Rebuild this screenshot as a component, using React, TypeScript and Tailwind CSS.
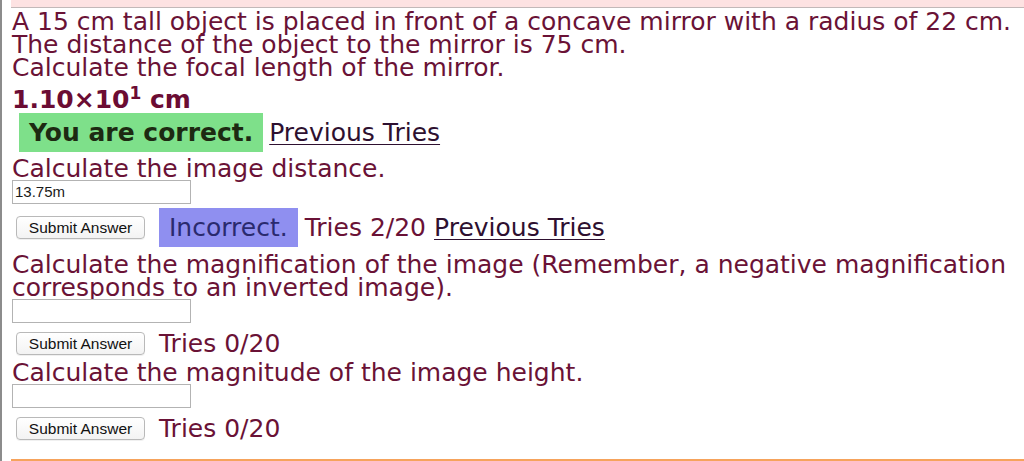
import React from "react";

const body = "font-['DejaVu_Sans',Verdana,sans-serif] text-[25px] leading-[23px] text-[#6a1236]";

function SubmitButton() {
  return (
    <button
      type="button"
      className="ml-[4px] h-[23px] w-[129px] shrink-0 rounded-[4px] border border-[#b9b9b9] bg-gradient-to-b from-white to-[#f3f3f3] font-['Liberation_Sans',Arial,sans-serif] text-[15.5px] leading-none text-[#111] shadow-[0_1px_0_rgba(0,0,0,0.06)]"
    >
      Submit Answer
    </button>
  );
}

function AnswerBox({ value = "" }: { value?: string }) {
  return (
    <div className="flex h-[24px] w-[179px] items-center border border-[#b3b3b3] bg-white px-[2px] font-['Liberation_Sans',Arial,sans-serif] text-[15px] text-[#1a1a1a]">
      {value}
    </div>
  );
}

function PrevTries() {
  return <span className="text-[#2e1030] underline decoration-1 underline-offset-[3px]">Previous Tries</span>;
}

export default function App() {
  return (
    <div className="flex h-[461px] w-[1024px] overflow-hidden border-l-2 border-[#8c8c8c] bg-white">
      <div className="ml-[9px] flex flex-1 flex-col">
        <div className="h-[8px] shrink-0 border-b border-[#c2b8b8] bg-[#fde2e2]" />

        <div className={`${body} mt-[2px] ml-[1px] whitespace-nowrap`}>
          A 15 cm tall object is placed in front of a concave mirror with a radius of 22 cm.
          <br />
          The distance of the object to the mirror is 75 cm.
          <br />
          Calculate the focal length of the mirror.
        </div>

        <div className={`${body} mt-[9px] ml-[1px] font-bold text-[#6b0c33]`}>
          1.10×10<sup className="relative -top-[3px] align-top text-[17px] leading-none">1</sup> cm
        </div>

        <div className={`${body} mt-[2px] ml-[8px] flex items-center`}>
          <span className="bg-[#7ee08a] px-[10px] py-[8px] font-bold text-[#1d2a12]">You are correct.</span>
          <span className="ml-[6px]">
            <PrevTries />
          </span>
        </div>

        <div className={`${body} mt-[5px] ml-[1px]`}>Calculate the image distance.</div>
        <div className="ml-[1px]">
          <AnswerBox value="13.75m" />
        </div>

        <div className={`${body} mt-[4px] ml-[1px] flex items-center`}>
          <SubmitButton />
          <span className="ml-[14px] bg-[#8f8ff0] px-[10px] py-[8px] text-[#2a2a6e]">Incorrect.</span>
          <span className="ml-[7px]">Tries 2/20</span>
          <span className="ml-[8px]">
            <PrevTries />
          </span>
        </div>

        <div className={`${body} mt-[6px] ml-[1px] whitespace-nowrap`}>
          Calculate the magnification of the image (Remember, a negative magnification
          <br />
          corresponds to an inverted image).
        </div>
        <div className="ml-[1px]">
          <AnswerBox />
        </div>

        <div className={`${body} mt-[9px] ml-[1px] flex items-center`}>
          <SubmitButton />
          <span className="ml-[14px]">Tries 0/20</span>
        </div>

        <div className={`${body} mt-[6px] ml-[1px]`}>Calculate the magnitude of the image height.</div>
        <div className="ml-[1px]">
          <AnswerBox />
        </div>

        <div className={`${body} mt-[9px] ml-[1px] flex items-center`}>
          <SubmitButton />
          <span className="ml-[14px]">Tries 0/20</span>
        </div>

        <div className="mt-[19px] h-[2px] shrink-0 bg-[#f6a35c]" />
      </div>
    </div>
  );
}
